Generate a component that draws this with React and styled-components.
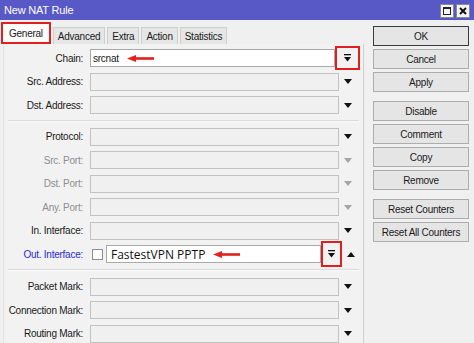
import React from "react";
import styled, { createGlobalStyle } from "styled-components";

const Global = createGlobalStyle`
   html, body {
      margin: 0;
      padding: 0;
      background: #f0f0f0;
   }
   body {
      font-family: "Liberation Sans", Arial, sans-serif;
      font-size: 10px;
      color: #1a1a1a;
   }
`;

const Window = styled.div`
   width: 474px;
   height: 343px;
   background: #f0f0f0;
   overflow: hidden;
   letter-spacing: -0.25px;
`;

const TitleBar = styled.div`
   height: 20px;
   background: #5858c6;
   color: #fff;
   display: flex;
   align-items: center;
   padding: 0 4px 0 4px;
   font-size: 11px;
   letter-spacing: -0.2px;
`;

const Title = styled.span`
   flex: 1;
`;

const WinBtn = styled.div`
   width: 12px;
   height: 12px;
   margin-left: 2px;
   margin-top: 2px;
   background: #f4f4f4;
   border: 1px solid #8a8a8a;
   display: flex;
   align-items: center;
   justify-content: center;
`;

const Main = styled.div`
   display: flex;
`;

const Left = styled.div`
   width: 364px;
`;

const Tabs = styled.div`
   display: flex;
   align-items: flex-end;
   height: 24px;
   padding-left: 1px;
   gap: 2px;
`;

const Tab = styled.div`
   height: ${(p) => (p.$active ? "22px" : "17px")};
   padding: 0 ${(p) => (p.$active ? "6px" : "4px")};
   display: flex;
   align-items: center;
   background: ${(p) => (p.$active ? "#fbfbfb" : "#e6e6e6")};
   border: ${(p) => (p.$active ? "2px solid #e0201e" : "1px solid #cfcfcf")};
   border-bottom: ${(p) => (p.$active ? "2px solid #e0201e" : "none")};
   box-sizing: border-box;
`;

const Panel = styled.div`
   height: 299px;
   border-right: 1px solid #cdcdcd;
   border-left: 1px solid #e2e2e2;
   margin-left: 3px;
   padding-top: 5px;
   box-sizing: border-box;
   background: #f2f2f2;
`;

const Row = styled.div`
   display: flex;
   align-items: center;
   height: 18px;
   margin-bottom: 5.5px;
`;

const Label = styled.div`
   width: 79px;
   padding-right: 7px;
   text-align: right;
   white-space: nowrap;
   color: ${(p) => (p.$blue ? "#2a2ad8" : p.$dim ? "#8e8e8e" : "#1a1a1a")};
`;

const Field = styled.div`
   width: ${(p) => p.$w || 249}px;
   height: 18px;
   box-sizing: border-box;
   border: 1px solid ${(p) => (p.$white ? "#a9a9a9" : "#c2c2c2")};
   background: ${(p) => (p.$white ? "#ffffff" : "#f0f0f0")};
   display: flex;
   align-items: center;
   padding-left: 2px;
   gap: 8px;
`;

const BigText = styled.span`
   font-family: "Open Sans", "Liberation Sans", sans-serif;
   font-size: 12px;
   letter-spacing: 0;
   color: #111;
   margin-left: 2px;
`;

const ArrowCell = styled.div`
   width: 18px;
   display: flex;
   justify-content: center;
   align-items: center;
`;

const RedBox = styled.div`
   width: ${(p) => p.$w}px;
   height: ${(p) => p.$h}px;
   box-sizing: border-box;
   border: 2px solid #e0201e;
   display: flex;
   align-items: center;
   justify-content: center;
   flex-shrink: 0;
`;

const Check = styled.div`
   width: 11px;
   height: 11px;
   box-sizing: border-box;
   border: 1px solid #8f8f8f;
   background: #fff;
   margin: 0 3px 0 2px;
`;

const Sep = styled.div`
   height: 1px;
   background: #d9d9d9;
   border-bottom: 1px solid #fafafa;
   margin: ${(p) => p.$m};
   margin-left: 4px;
   margin-right: 4px;
`;

const Right = styled.div`
   padding: 6px 0 0 9px;
   display: flex;
   flex-direction: column;
`;

const Button = styled.div`
   width: 96px;
   height: 20px;
   box-sizing: border-box;
   border: 1px solid ${(p) => (p.$default ? "#3c3c3c" : "#adadad")};
   background: #e5e5e5;
   display: flex;
   align-items: center;
   justify-content: center;
   margin-top: ${(p) => (p.$gap ? "9px" : "3px")};
   &:first-child {
      margin-top: 0;
   }
`;

const Down = ({ dim }) => (
   <svg width="8" height="5" viewBox="0 0 8 5">
      <polygon points="0,0 8,0 4,5" fill={dim ? "#a5a5a5" : "#111"} />
   </svg>
);

const Up = () => (
   <svg width="8" height="5" viewBox="0 0 8 5">
      <polygon points="0,5 8,5 4,0" fill="#111" />
   </svg>
);

const BarDown = () => (
   <svg width="7" height="8" viewBox="0 0 7 8">
      <rect x="0" y="0" width="7" height="1.3" fill="#111" />
      <polygon points="0,3 7,3 3.5,7.5" fill="#111" />
   </svg>
);

const RedArrow = () => (
   <svg width="27" height="7" viewBox="0 0 27 7">
      <rect x="7" y="2.2" width="20" height="2.6" fill="#e3211b" />
      <polygon points="0,3.5 9,0 9,7" fill="#e3211b" />
   </svg>
);

const FormRow = ({ label, dim }) => (
   <Row>
      <Label $dim={dim}>{label}</Label>
      <Field />
      <ArrowCell>
         <Down dim={dim} />
      </ArrowCell>
   </Row>
);

const buttons = [
   ["OK", false],
   ["Cancel", false],
   ["Apply", false],
   ["Disable", true],
   ["Comment", false],
   ["Copy", false],
   ["Remove", false],
   ["Reset Counters", true],
   ["Reset All Counters", false],
];

const App = () => {
   return (
      <Window>
         <Global />
         <TitleBar>
            <Title>New NAT Rule</Title>
            <WinBtn>
               <svg width="8" height="8" viewBox="0 0 8 8">
                  <rect x="0.5" y="0.5" width="7" height="7" fill="none" stroke="#222" />
                  <rect x="0.5" y="0.5" width="7" height="1.5" fill="#222" />
               </svg>
            </WinBtn>
            <WinBtn>
               <svg width="8" height="8" viewBox="0 0 8 8">
                  <path d="M1 1 L7 7 M7 1 L1 7" stroke="#111" strokeWidth="2" />
               </svg>
            </WinBtn>
         </TitleBar>
         <Main>
            <Left>
               <Tabs>
                  <Tab $active>General</Tab>
                  <Tab>Advanced</Tab>
                  <Tab>Extra</Tab>
                  <Tab>Action</Tab>
                  <Tab>Statistics</Tab>
               </Tabs>
               <Panel>
                  <Row>
                     <Label>Chain:</Label>
                     <Field $white $w={245}>
                        <span>srcnat</span>
                        <RedArrow />
                     </Field>
                     <RedBox $w={25} $h={24}>
                        <BarDown />
                     </RedBox>
                  </Row>
                  <FormRow label="Src. Address:" />
                  <FormRow label="Dst. Address:" />
                  <Sep $m="2px 0 6px" />
                  <FormRow label="Protocol:" />
                  <FormRow label="Src. Port:" dim />
                  <FormRow label="Dst. Port:" dim />
                  <FormRow label="Any. Port:" dim />
                  <FormRow label="In. Interface:" />
                  <Row>
                     <Label $blue>Out. Interface:</Label>
                     <Check />
                     <Field $white $w={215}>
                        <BigText>FastestVPN PPTP</BigText>
                        <RedArrow />
                     </Field>
                     <RedBox $w={21} $h={26}>
                        <BarDown />
                     </RedBox>
                     <ArrowCell>
                        <Up />
                     </ArrowCell>
                  </Row>
                  <Sep $m="1px 0 7px" />
                  <FormRow label="Packet Mark:" />
                  <FormRow label="Connection Mark:" />
                  <FormRow label="Routing Mark:" />
               </Panel>
            </Left>
            <Right>
               {buttons.map(([text, gap], i) => (
                  <Button key={text} $gap={gap} $default={i === 0}>
                     {text}
                  </Button>
               ))}
            </Right>
         </Main>
      </Window>
   );
};

export default App;
